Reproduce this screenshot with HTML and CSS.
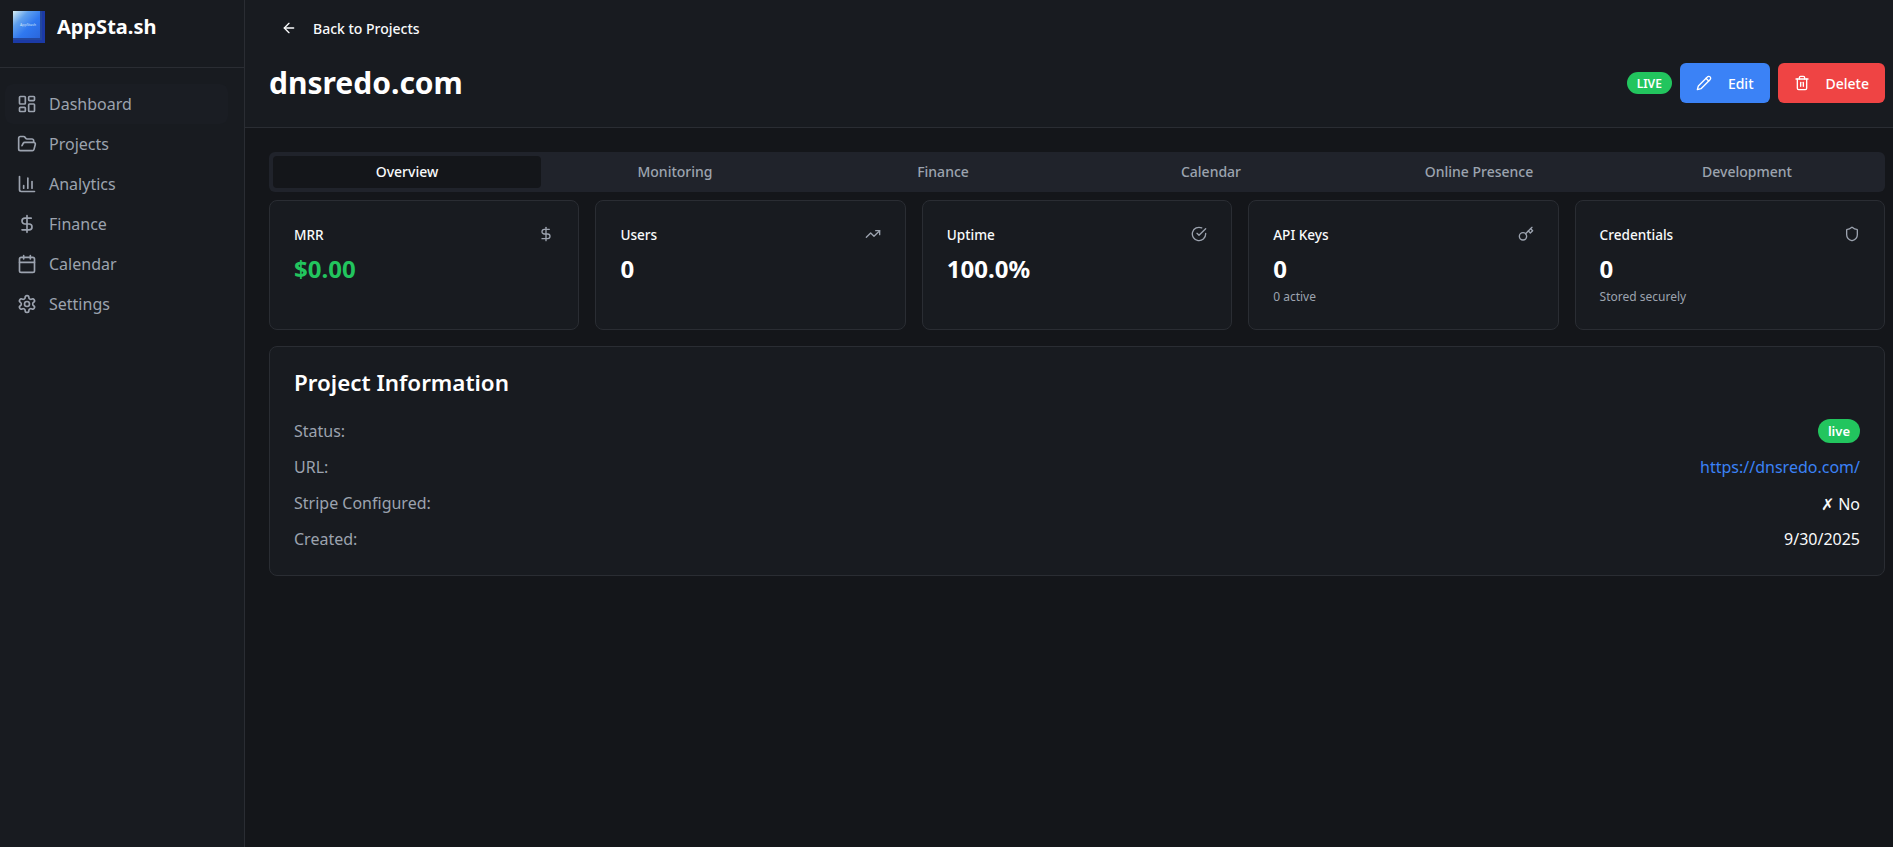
FILE: index.html
```html
<!DOCTYPE html>
<html lang="en">
<head>
<meta charset="utf-8">
<title>dnsredo.com</title>
<link rel="stylesheet" href="styles.css">
</head>
<body>
<div class="app">
  <aside class="sidebar">
    <div class="brand">
      <svg class="logo" viewBox="0 0 32 32">
        <defs>
          <linearGradient id="lg" x1="0" y1="0" x2="1" y2="1">
            <stop offset="0" stop-color="#d8f0f6"/><stop offset=".3" stop-color="#5fa0ee"/><stop offset=".6" stop-color="#2f78f0"/><stop offset="1" stop-color="#2a66dc"/>
          </linearGradient>
        </defs>
        <rect width="32" height="32" fill="#1b3aa6"/>
        <rect x="0" y="0" width="29" height="29" fill="#23479f"/>
        <rect x="0" y="0" width="27" height="27" fill="url(#lg)"/>
        <text x="15" y="15" class="logo-text">AppStash</text>
      </svg>
      <span class="brand-name">AppSta.sh</span>
    </div>
    <nav class="nav">
      <a class="nav-item active"><svg class="ico20" viewBox="0 0 24 24"><rect x="3" y="3" width="7" height="9" rx="1"/><rect x="14" y="3" width="7" height="5" rx="1"/><rect x="14" y="12" width="7" height="9" rx="1"/><rect x="3" y="16" width="7" height="5" rx="1"/></svg>Dashboard</a>
      <a class="nav-item"><svg class="ico20" viewBox="0 0 24 24"><path d="m6 14 1.5-2.9A2 2 0 0 1 9.24 10H20a2 2 0 0 1 1.94 2.5l-1.54 6a2 2 0 0 1-1.95 1.5H4a2 2 0 0 1-2-2V5a2 2 0 0 1 2-2h3.9a2 2 0 0 1 1.69.9l.81 1.2a2 2 0 0 0 1.67.9H18a2 2 0 0 1 2 2v2"/></svg>Projects</a>
      <a class="nav-item"><svg class="ico20" viewBox="0 0 24 24"><path d="M3 3v16a2 2 0 0 0 2 2h16"/><path d="M18 17V9"/><path d="M13 17V5"/><path d="M8 17v-3"/></svg>Analytics</a>
      <a class="nav-item"><svg class="ico20" viewBox="0 0 24 24"><path d="M12 2v20"/><path d="M17 5H9.5a3.5 3.5 0 0 0 0 7h5a3.5 3.5 0 0 1 0 7H6"/></svg>Finance</a>
      <a class="nav-item"><svg class="ico20" viewBox="0 0 24 24"><path d="M8 2v4"/><path d="M16 2v4"/><rect x="3" y="4" width="18" height="18" rx="2"/><path d="M3 10h18"/></svg>Calendar</a>
      <a class="nav-item"><svg class="ico20" viewBox="0 0 24 24"><path d="M12.22 2h-.44a2 2 0 0 0-2 2v.18a2 2 0 0 1-1 1.73l-.43.25a2 2 0 0 1-2 0l-.15-.08a2 2 0 0 0-2.73.73l-.22.38a2 2 0 0 0 .73 2.73l.15.1a2 2 0 0 1 1 1.72v.51a2 2 0 0 1-1 1.74l-.15.09a2 2 0 0 0-.73 2.73l.22.38a2 2 0 0 0 2.73.73l.15-.08a2 2 0 0 1 2 0l.43.25a2 2 0 0 1 1 1.73V20a2 2 0 0 0 2 2h.44a2 2 0 0 0 2-2v-.18a2 2 0 0 1 1-1.73l.43-.25a2 2 0 0 1 2 0l.15.08a2 2 0 0 0 2.73-.73l.22-.39a2 2 0 0 0-.73-2.73l-.15-.08a2 2 0 0 1-1-1.74v-.5a2 2 0 0 1 1-1.74l.15-.09a2 2 0 0 0 .73-2.73l-.22-.38a2 2 0 0 0-2.73-.73l-.15.08a2 2 0 0 1-2 0l-.43-.25a2 2 0 0 1-1-1.73V4a2 2 0 0 0-2-2z"/><circle cx="12" cy="12" r="3"/></svg>Settings</a>
    </nav>
  </aside>
  <div class="page">
    <header class="topbar">
      <a class="back"><svg class="ico16" viewBox="0 0 24 24"><path d="m12 19-7-7 7-7"/><path d="M19 12H5"/></svg>Back to Projects</a>
      <div class="title-row">
        <h1>dnsredo.com</h1>
        <div class="actions">
          <span class="badge badge-live">LIVE</span>
          <button class="btn btn-edit"><svg class="ico16" viewBox="0 0 24 24"><path d="M17 3a2.85 2.83 0 1 1 4 4L7.5 20.5 2 22l1.5-5.5Z"/><path d="m15 5 4 4"/></svg>Edit</button>
          <button class="btn btn-delete"><svg class="ico16" viewBox="0 0 24 24"><path d="M3 6h18"/><path d="M19 6v14c0 1-1 2-2 2H7c-1 0-2-1-2-2V6"/><path d="M8 6V4c0-1 1-2 2-2h4c1 0 2 1 2 2v2"/><path d="M10 11v6"/><path d="M14 11v6"/></svg>Delete</button>
        </div>
      </div>
    </header>
    <main class="content">
      <div class="tabs">
        <div class="tab active">Overview</div>
        <div class="tab">Monitoring</div>
        <div class="tab">Finance</div>
        <div class="tab">Calendar</div>
        <div class="tab">Online Presence</div>
        <div class="tab">Development</div>
      </div>
      <section class="stats">
        <div class="card stat">
          <div class="stat-head"><span>MRR</span><svg class="ico16" viewBox="0 0 24 24"><path d="M12 2v20"/><path d="M17 5H9.5a3.5 3.5 0 0 0 0 7h5a3.5 3.5 0 0 1 0 7H6"/></svg></div>
          <div class="stat-value green">$0.00</div>
        </div>
        <div class="card stat">
          <div class="stat-head"><span>Users</span><svg class="ico16" viewBox="0 0 24 24"><path d="M22 7 13.5 15.5 8.5 10.5 2 17"/><path d="M16 7h6v6"/></svg></div>
          <div class="stat-value">0</div>
        </div>
        <div class="card stat">
          <div class="stat-head"><span>Uptime</span><svg class="ico16" viewBox="0 0 24 24"><path d="M22 11.08V12a10 10 0 1 1-5.93-9.14"/><path d="m9 11 3 3L22 4"/></svg></div>
          <div class="stat-value">100.0%</div>
        </div>
        <div class="card stat">
          <div class="stat-head"><span>API Keys</span><svg class="ico16" viewBox="0 0 24 24"><circle cx="7.5" cy="15.5" r="5.5"/><path d="m21 2-9.6 9.6"/><path d="m15.5 7.5 3 3L22 7l-3-3"/></svg></div>
          <div class="stat-value">0</div>
          <div class="stat-sub">0 active</div>
        </div>
        <div class="card stat">
          <div class="stat-head"><span>Credentials</span><svg class="ico16" viewBox="0 0 24 24"><path d="M20 13c0 5-3.5 7.5-7.66 8.95a1 1 0 0 1-.67-.01C7.5 20.5 4 18 4 13V6a1 1 0 0 1 1-1c2 0 4.5-1.2 6.24-2.72a1.17 1.17 0 0 1 1.52 0C14.51 3.81 17 5 19 5a1 1 0 0 1 1 1z"/></svg></div>
          <div class="stat-value">0</div>
          <div class="stat-sub">Stored securely</div>
        </div>
      </section>
      <section class="card info">
        <h2>Project Information</h2>
        <div class="info-row"><span class="info-label">Status:</span><span class="badge badge-status">live</span></div>
        <div class="info-row"><span class="info-label">URL:</span><a class="link">https://dnsredo.com/</a></div>
        <div class="info-row"><span class="info-label">Stripe Configured:</span><span><span class="cross">✗</span> No</span></div>
        <div class="info-row"><span class="info-label">Created:</span><span>9/30/2025</span></div>
      </section>
    </main>
  </div>
</div>
</body>
</html>
```

FILE: styles.css
```css
* { box-sizing: border-box; }
html, body { margin: 0; height: 100%; }
body {
  background: #14161a;
  color: #f9fafb;
  font-family: "Noto Sans", "Open Sans", sans-serif;
  font-size: 16px;
  overflow: hidden;
}
svg { fill: none; stroke: currentColor; stroke-width: 2; stroke-linecap: round; stroke-linejoin: round; flex: none; }
.ico20 { width: 20px; height: 20px; }
.ico16 { width: 16px; height: 16px; }
.app { display: flex; height: 100vh; }

.sidebar { width: 245px; flex: none; background: #181b20; border-right: 1px solid #2a2d33; }
.brand { height: 68px; display: flex; align-items: flex-start; gap: 12px; padding: 11px 0 0 13px; border-bottom: 1px solid #2a2d33; }
.logo { width: 32px; height: 32px; stroke: none; }
.logo-text { fill: #cfe3fa; font-size: 3.6px; text-anchor: middle; font-family: "Noto Sans", sans-serif; }
.brand-name { font-size: 20px; font-weight: 700; line-height: 32px; color: #fff; }
.nav { padding: 16px 16px 0 5px; display: flex; flex-direction: column; }
.nav-item { height: 40px; display: flex; align-items: center; gap: 12px; padding-left: 12px; border-radius: 8px; color: #9ca3af; }
.nav-item.active { background: #1a1d23; }

.page { flex: 1; min-width: 0; display: flex; flex-direction: column; }
.topbar { height: 128px; background: #181b20; border-bottom: 1px solid #2a2d33; padding: 8px 8px 0 24px; }
.back { display: flex; align-items: center; gap: 16px; height: 40px; padding-left: 12px; font-size: 14px; font-weight: 500; color: #f9fafb; }
.title-row { display: flex; align-items: center; justify-content: space-between; margin-top: 15px; }
h1 { margin: 0; font-size: 30px; line-height: 40px; font-weight: 700; color: #fff; }
.actions { display: flex; align-items: center; gap: 8px; }
.badge { display: inline-flex; align-items: center; border-radius: 999px; background: #22c55e; color: #fff; font-weight: 600; font-size: 12px; }
.badge-live { height: 22px; padding: 0 10px; }
.badge-status { height: 24px; padding: 0 10px; font-size: 13px; }
.btn { height: 40px; border: 0; border-radius: 6px; display: flex; align-items: center; gap: 16px; padding: 0 16px; color: #fff; font: 500 14px "Noto Sans", sans-serif; }
.btn-edit { background: #3b82f6; }
.btn-delete { background: #ef4444; }

.content { flex: 1; padding: 24px 8px 0 24px; }
.tabs { display: grid; grid-template-columns: repeat(6, 1fr); height: 40px; padding: 4px; background: #20232b; border-radius: 6px; }
.tab { display: flex; align-items: center; justify-content: center; padding-bottom: 2px; font-size: 14px; font-weight: 500; color: #9ca3af; border-radius: 4px; }
.tab.active { background: #14161a; color: #f9fafb; }

.stats { display: grid; grid-template-columns: repeat(5, 1fr); gap: 16px; margin-top: 8px; }
.card { background: #181b20; border: 1px solid #2a2d33; border-radius: 8px; }
.stat { height: 130px; padding: 23px 24px; }
.stat-head { display: flex; align-items: center; justify-content: space-between; height: 20px; font-size: 13.6px; font-weight: 500; color: #f9fafb; }
.stat-head svg { color: #9ca3af; }
.stat-value { margin-top: 9px; font-size: 24px; line-height: 32px; font-weight: 700; color: #fff; }
.stat-value.green { color: #22c55e; }
.stat-sub { margin-top: 4px; font-size: 12px; line-height: 16px; color: #9ca3af; }

.info { margin-top: 16px; height: 230px; padding: 24px; }
h2 { margin: 0 0 10px; font-size: 22.4px; line-height: 24px; font-weight: 600; color: #fff; height: 32px; }
.info-row { height: 36px; display: flex; align-items: center; justify-content: space-between; color: #f9fafb; }
.info-label { color: #9ca3af; }
.link { color: #3b82f6; }
.cross { font-family: "Noto Sans CJK SC", "DejaVu Sans", sans-serif; font-weight: 300; }
```
